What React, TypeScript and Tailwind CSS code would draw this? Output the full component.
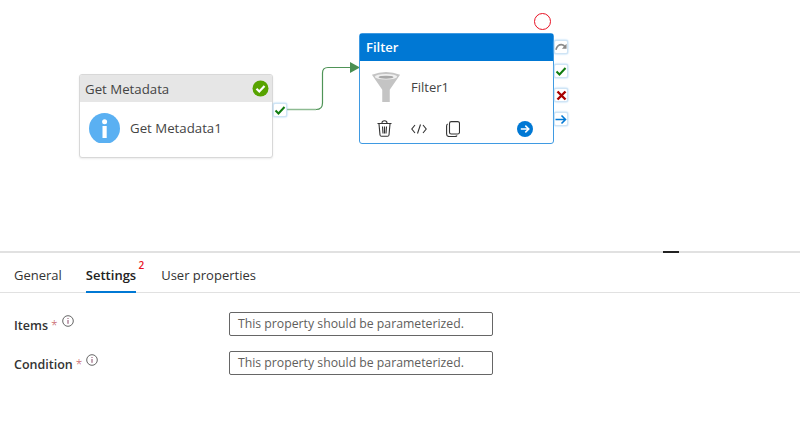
import { FC, ReactNode } from 'react';

const font = "font-['Open_Sans','Noto_Sans',sans-serif]";

const Check = ({ color = '#107c10' }: { color?: string }) => (
  <svg width="12" height="12" viewBox="0 0 12 12" fill="none">
    <path d="M1.5 6.5 L4.5 9.5 L10.5 3" stroke={color} strokeWidth="2" />
  </svg>
);

const PortBox: FC<{ className?: string; children: ReactNode }> = ({ className = '', children }) => (
  <div
    className={`w-[14px] h-[14px] flex items-center justify-center bg-white border border-[#cfe4f5] rounded-[2px] shadow-[0_0_2px_#8cc4ee] ${className}`}
  >
    {children}
  </div>
);

const InfoDot = () => (
  <svg width="12" height="12" viewBox="0 0 12 12" fill="none" className="shrink-0">
    <circle cx="6" cy="6" r="5.3" stroke="#555" strokeWidth="0.9" />
    <rect x="5.5" y="5" width="1" height="3.8" fill="#8a4a6a" />
    <rect x="5.5" y="3" width="1" height="1" fill="#8a4a6a" />
  </svg>
);

const Canvas = () => (
  <div className="relative h-[251px] shrink-0 overflow-hidden">
    {/* connector */}
    <svg className="absolute left-0 top-0" width="800" height="251" fill="none">
      <path d="M287 109.5 H316 Q322.5 109.5 322.5 103 V73 Q322.5 67.5 328 67.5 H351" stroke="#4f9457" strokeWidth="1.2" />
      <path d="M287 109.5 H316" stroke="#8dbb92" strokeWidth="1.5" />
      <path d="M350 62 L360 67.5 L350 73 Z" fill="#4a8f52" />
    </svg>

    {/* Get Metadata node */}
    <div className="absolute left-[79px] top-[74px] w-[194px] h-[84px] bg-white border border-[#d8d8d8] rounded-[3px] shadow-[0_1px_2px_rgba(0,0,0,0.08)]">
      <div className="h-[27px] bg-[#e6e6e6] flex items-center justify-between pl-[5px] pr-[3px] rounded-t-[2px]">
        <span className="text-[13.25px] text-[#444] pt-[2px]">Get Metadata</span>
        <svg width="17" height="17" viewBox="0 0 17 17" fill="none">
          <circle cx="8.5" cy="8.5" r="8" fill="#57a300" />
          <path d="M4.5 8.8 L7.3 11.5 L12.5 6" stroke="white" strokeWidth="2.2" />
        </svg>
      </div>
      <div className="flex items-center pl-[9px] pt-[11px] gap-[10px]">
        <svg width="31" height="30" viewBox="0 0 31 30">
          <circle cx="15.5" cy="15.5" r="15.5" fill="#5ab0f2" />
          <rect x="13.5" y="13" width="4.2" height="12" fill="white" />
          <circle cx="15.6" cy="8.8" r="2.5" fill="white" />
        </svg>
        <span className="text-[13.25px] text-[#444] pt-[2px]">Get Metadata1</span>
      </div>
    </div>
    <PortBox className="absolute left-[273px] top-[103px]">
      <Check />
    </PortBox>

    {/* red circle over the filter node */}
    <div className="absolute left-[534px] top-[13px] w-[17px] h-[17px] rounded-full border border-[#e81123]" />

    {/* Filter node */}
    <div className="absolute left-[359px] top-[33px] w-[195px] h-[111px] bg-white border border-[#3f9ae2] rounded-[3px]">
      <div className="h-[27px] bg-[#0078d4] flex items-center pl-[6px]">
        <span className="text-[13px] font-semibold text-white">Filter</span>
      </div>
      <div className="flex items-center pl-[11px] pt-[11px] gap-[10px]">
        <svg width="30" height="30" viewBox="0 0 30 32">
          <path d="M0 3 Q15 -3 30 3 L19 19 V32 H11 V19 Z" fill="#c4c4c4" />
          <ellipse cx="15" cy="5" rx="12" ry="3" fill="#f0f0f0" />
          <ellipse cx="15" cy="5.5" rx="8" ry="1.6" fill="#a8a8a8" />
        </svg>
        <span className="text-[13px] text-[#444] pt-[1px]">Filter1</span>
      </div>
      <div className="flex items-center pl-[17px] pt-[18px]">
        <svg width="15" height="17" viewBox="0 0 15 17" fill="none" stroke="#333" strokeWidth="1.1">
          <path d="M0.5 3.5 H14.5 M5 3 Q5 0.7 7.5 0.7 Q10 0.7 10 3 M2 4 L3 15 Q3.2 16.3 4.5 16.3 H10.5 Q11.8 16.3 12 15 L13 4 M5.5 6.5 L6 13.5 M7.5 6.5 V13.5 M9.5 6.5 L9 13.5" />
        </svg>
        <svg className="ml-[19px]" width="16" height="10" viewBox="0 0 16 10" fill="none" stroke="#333" strokeWidth="1.1">
          <path d="M4 1 L0.8 5 L4 9 M12 1 L15.2 5 L12 9 M9.5 0.5 L6.5 9.5" />
        </svg>
        <svg className="ml-[19px]" width="14" height="16" viewBox="0 0 14 16" fill="none" stroke="#333" strokeWidth="1.1">
          <rect x="3.5" y="0.6" width="10" height="12.4" rx="1.8" />
          <path d="M1.7 3 Q0.6 3.5 0.6 5 V13 Q0.6 15.5 3 15.5 H9 Q10.5 15.5 11 14.4" />
        </svg>
        <svg className="ml-[57px]" width="16" height="16" viewBox="0 0 16 16" fill="none">
          <circle cx="8" cy="8" r="8" fill="#0078d4" />
          <path d="M3.8 8 H11.5 M8.3 4.6 L11.8 8 L8.3 11.4" stroke="white" strokeWidth="1.5" />
        </svg>
      </div>
    </div>

    {/* Filter ports */}
    <div className="absolute left-[554px] top-[40px] flex flex-col gap-[10px]">
      <PortBox>
        <svg width="13" height="10" viewBox="0 0 13 10" fill="none">
          <path d="M1 8 Q2.5 2.5 7 2.5 Q9.5 2.5 11 5" stroke="#8a8a8a" strokeWidth="1.8" />
          <path d="M12.5 1.5 V7 H7.5 Z" fill="#8a8a8a" />
        </svg>
      </PortBox>
      <PortBox>
        <Check />
      </PortBox>
      <PortBox>
        <svg width="11" height="11" viewBox="0 0 11 11" fill="none">
          <path d="M1.5 1.5 L9.5 9.5 M9.5 1.5 L1.5 9.5" stroke="#a80000" strokeWidth="2.4" />
        </svg>
      </PortBox>
      <PortBox>
        <svg width="12" height="11" viewBox="0 0 12 11" fill="none">
          <path d="M0.5 5.5 H10 M6.5 1.5 L10.5 5.5 L6.5 9.5" stroke="#0078d4" strokeWidth="1.6" />
        </svg>
      </PortBox>
    </div>
  </div>
);

const Field: FC<{ label: string }> = ({ label }) => (
  <div className="flex items-center h-[24px]">
    <div className="w-[215px] flex items-center">
      <span className="text-[12.5px] text-[#333] font-semibold pt-[4px]">{label}</span>
      <span className="text-[12px] font-light text-[#c4565c] ml-[3px] pt-[4px]">*</span>
      <span className="ml-[4px] -mt-[6px]">
        <InfoDot />
      </span>
    </div>
    <div className="w-[264px] h-[24px] border border-[#666] rounded-[2px] pl-[8px] flex items-center text-[12.25px] text-[#605e5c]">
      This property should be parameterized.
    </div>
  </div>
);

export default function App() {
  return (
    <div className={`${font} w-[800px] h-[436px] bg-white overflow-hidden flex flex-col relative`}>
      <Canvas />
      <div className="h-[2px] bg-[#e1e1e1] shrink-0" />
      <div className="absolute left-[663px] top-[251px] w-[16px] h-[2px] bg-[#222]" />

      <div className="flex h-[40px] border-b border-[#e1e1e1] pl-[14px] shrink-0">
        <div className="flex items-center pt-[7px] text-[13px] text-[#333]">General</div>
        <div className="relative ml-[24px] flex items-center pt-[7px] h-[40px] border-b-2 border-[#0078d4] text-[13px] font-semibold text-[#222]">
          Settings
          <span className="absolute -right-[8px] top-[5px] text-[10px] text-[#e81123]">2</span>
        </div>
        <div className="ml-[25px] flex items-center pt-[7px] text-[13px] text-[#333]">User properties</div>
      </div>

      <div className="flex flex-col gap-[15px] pl-[14px] pt-[19px]">
        <Field label="Items" />
        <Field label="Condition" />
      </div>
    </div>
  );
}
